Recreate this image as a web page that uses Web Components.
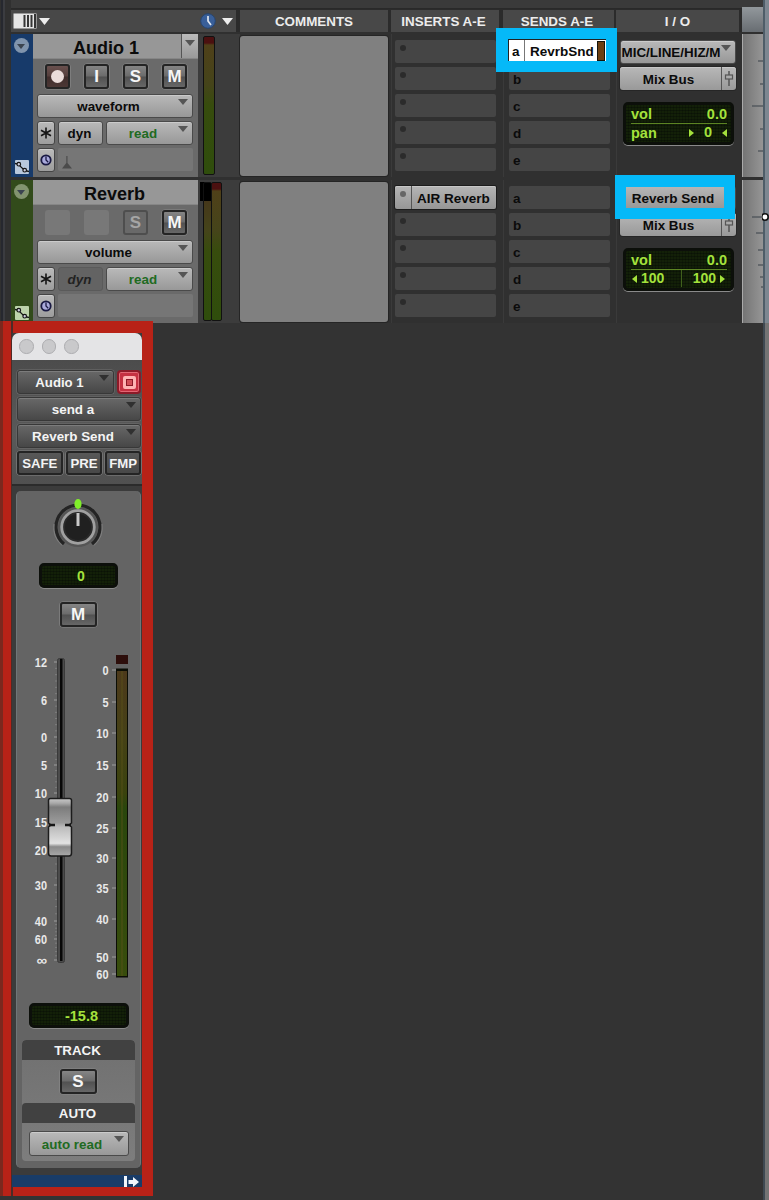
<!DOCTYPE html>
<html lang="en">
<head>
<meta charset="utf-8">
<title>Edit window</title>
<style>
html,body{margin:0;background:#333;height:1200px;overflow:hidden}
body{font:bold 13.4px/24px "Liberation Sans",Arial,sans-serif;color:#0b0b0b;width:769px}
</style>
</head>
<body>
<daw-app></daw-app>
<script>
const define = (name, css, html) => customElements.define(name, class extends HTMLElement {
  constructor() {
    super();
    const t = document.createElement('template');
    const markup = typeof html === 'function' ? html(this) : html;
    t.innerHTML = `<style>*{box-sizing:border-box}:host{display:block;box-sizing:border-box}${css}</style>${markup}`;
    this.attachShadow({ mode: 'open' }).appendChild(t.content.cloneNode(true));
  }
});
const tri = (c, w = 10, h = 6) => `<svg width="${w}" height="${h}" viewBox="0 0 10 6" preserveAspectRatio="none"><path d="M0 0H10L5 6Z" fill="${c}"/></svg>`;

/* light popup selector */
define('pop-select', `
:host{height:24px;border-radius:3px;border:1px solid #4a4a4a;background:linear-gradient(#b9b9b9,#989898);box-shadow:inset 0 1px #cbcbcb;display:flex;align-items:center;justify-content:center;position:relative;line-height:22px;white-space:nowrap;overflow:hidden}
:host([auto]){color:#1f6b22}
:host([plain]) svg{display:none}
:host([flat]){background:#636363;border-color:#5a5a5a;box-shadow:none;color:#222;font-style:italic}
:host([dark]){color:#f4f4f4;background:linear-gradient(#686868,#474747);border-color:#383838;box-shadow:inset 0 1px #7c7c7c,0 0 0 .5px #707070}
span{padding-top:2px}
svg{position:absolute;right:4px;top:4px}`,
  e => `<span style="padding-right:var(--pr,0)"><slot></slot></span>${tri(e.hasAttribute('dark') ? '#303030' : '#555')}`);

/* square button: record, input, solo, mute */
define('mini-button', `
:host{width:25px;height:25px;border-radius:3px;border:2px solid #242424;background:linear-gradient(#858585,#6b6b6b 48%,#515151 52%,#676767);color:#f6f6f6;font-size:17px;line-height:22px;text-align:center;box-shadow:0 0 0 .6px #8a8a8a}
:host([wide]){width:37px}
:host([rec]){background:linear-gradient(#69504e,#563f3d 48%,#402d2c 52%,#4c3735);display:flex;align-items:center;justify-content:center}
:host([dim]){color:#a5a5a5;background:#696969;border-color:#4e4e4e;box-shadow:none}
:host([blank]){border:0;background:#787878;box-shadow:none}
i{width:13px;height:13px;border-radius:50%;background:#eadcda;flex:none}`,
  e => e.hasAttribute('rec') ? '<i></i>' : '<slot></slot>');

define('icon-button', `
:host{width:18px;height:24px;border-radius:3px;border:1px solid #454545;background:linear-gradient(#bababa,#9d9d9d);box-shadow:inset 0 1px #cdcdcd;display:flex;align-items:center;justify-content:center}`,
  e => e.getAttribute('kind') === 'star'
    ? `<svg width="12" height="12" viewBox="-6 -6 12 12" stroke="#151515" stroke-width="1.6"><path d="M0-5.6V5.6M-5-2.8L5 2.8M-5 2.8L5-2.8"/></svg>`
    : `<svg width="12" height="12" viewBox="-6 -6 12 12" fill="none"><circle r="4.7" fill="#a9a9dc" stroke="#191943" stroke-width="1.8"/><path d="M0-3.6V0L2.2 2.2" stroke="#191943" stroke-width="1.3"/></svg>`);

define('level-meter', `
:host{width:var(--w,12px);height:139px;border:1px solid #111;border-radius:2px;background:linear-gradient(#4b1010 0 6px,#4f4019 8px,#45441a 35%,#374c0d 50%,#2f4d0c)}
`, '');

define('track-head', `
:host{display:flex;height:143px;width:187px}
.strip{width:22px;background:var(--strip);display:flex;flex-direction:column;align-items:center;justify-content:space-between;padding:4px 2px 3px 0}
.fold{width:15px;height:15px;border-radius:50%;background:var(--fold);display:flex;align-items:center;justify-content:center;padding-top:1px}
.auto{display:block;margin-right:-2px}
.body{width:165px;background:#6a6a6a}
.name{height:25px;background:#979797;display:flex;font-size:18px;line-height:28px;border-bottom:1px solid #868686}
.name span{flex:1;text-align:center}
.menu{width:17px;background:linear-gradient(#bbb,#999);border-left:1px solid #555;display:flex;justify-content:center;padding-top:6px}
.btns{display:flex;gap:14px;padding:5px 0 0 12px;height:35px}
.controls{display:grid;gap:3px;padding-left:4px}
.line{display:flex;gap:3px}
.note{width:135px;height:23px;background:#767676;border-radius:2px;padding:5px 0 0 3px}
`, e => {
    const a = e.hasAttribute('audio');
    return `<div class="strip"><div class="fold">${tri('#3b4450', 8, 5)}</div>
<svg class="auto" width="14" height="14" viewBox="0 0 14 14"><rect width="14" height="14" rx="1" fill="${a ? '#b9c8dc' : '#bdd3ab'}"/><path d="M0 3.5L3 4L9.6 10.5L14 11.5" stroke="#161616" stroke-width="1.3" fill="none"/><circle cx="3.8" cy="4.2" r="1.8" fill="#ccd" stroke="#161616" stroke-width="1.2"/><circle cx="9.7" cy="10.2" r="1.8" fill="#ccd" stroke="#161616" stroke-width="1.2"/></svg></div>
<div class="body"><div class="name"><span style="padding-right:${a ? 2 : 2}px">${e.getAttribute('label')}</span>${a ? `<div class="menu">${tri('#555')}</div>` : ''}</div>
<div class="btns">${a ? '<mini-button rec></mini-button><mini-button>I</mini-button><mini-button>S</mini-button>' : '<mini-button blank></mini-button><mini-button blank></mini-button><mini-button dim>S</mini-button>'}<mini-button>M</mini-button></div>
<div class="controls"><pop-select style="width:156px;--pr:13px">${e.getAttribute('view')}</pop-select>
<div class="line"><icon-button kind="star"></icon-button><pop-select plain ${a ? '' : 'flat'} style="width:45px;--pr:2px">dyn</pop-select><pop-select auto style="width:87px;--pr:13px">read</pop-select></div>
<div class="line"><icon-button kind="clock"></icon-button><div class="note">${a ? '<svg width="12" height="13" viewBox="0 0 12 13"><path d="M5.3 0H6.5V7L11 12.5H1L5.3 7Z" fill="#4b4b4b"/></svg>' : ''}</div></div></div></div>`;
  });

define('slot-cell', `
:host{height:23px;border-radius:2px;background:#454545;display:flex;line-height:25px;padding-left:4px;font-size:13.5px;white-space:nowrap}
:host([on]){background:linear-gradient(#b5b5b5,#969696);box-shadow:0 0 0 1px #1c1c1c,inset 0 1px #c7c7c7}
.dot{width:6px;height:6px;border-radius:50%;background:#2b2b2b;margin:5px 0 0 1px}
:host([on]) .dot{background:#666}
.plug{border-left:1px solid #555;margin-left:5px;padding-left:5px}`,
  e => e.hasAttribute('insert') ? `<span class="dot"></span>${e.hasAttribute('on') ? '<span class="plug"><slot></slot></span>' : ''}` : '<slot></slot>');

define('value-display', `
:host{border:3px solid #0c0f0a;border-radius:5px;background:repeating-linear-gradient(90deg,#0000 0 2px,#0003 2px 3px),repeating-linear-gradient(#132008 0 2px,#0d1707 2px 3px);color:#a4e23c;box-shadow:0 1px #8a8a8a;text-align:center;font-size:14.5px}`, '<slot></slot>');

define('io-counter', `
:host{width:111px;height:43px;margin:12px 0 0 3px}
value-display{height:43px;text-align:left;padding:0 4px 0 5px}
.r{display:flex;justify-content:space-between;height:18px;line-height:18px}
.r+.r{border-top:1px solid #5c8423;line-height:19px}
.p{display:flex;align-items:center;gap:10px;padding-right:0}
.b{display:flex;align-items:center;gap:4px;font-size:14px}
.b+.b{border-left:1px solid #40601c;padding-left:11px}
`, e => {
    const l = '<svg width="5" height="8"><path d="M5 0V8L0 4Z" fill="#a4e23c"/></svg>', r = '<svg width="5" height="8"><path d="M0 0V8L5 4Z" fill="#a4e23c"/></svg>';
    return `<value-display><div class="r"><span>vol</span><span>0.0</span></div>${e.hasAttribute('stereo')
      ? `<div class="r" style="padding:0 2px 0 1px"><span class="b">${l}<span>100</span></span><span class="b"><span>100</span>${r}</span></div>`
      : `<div class="r"><span>pan</span><span class="p">${r}<span>0</span>${l}</span></div>`}</value-display>`;
  });

define('track-row', `
:host{display:grid;grid-template-columns:229px 151px 112px 113px 126px 22px;height:143px;margin-left:11px;background:#303030}
.head{display:flex;background:#3c3c3c}
.meters{display:flex;padding:2px 0 0 var(--mx,5px)}
.com{background:#808080;margin:2px 3px 1px 0;border-radius:3px;box-shadow:0 0 0 1px #252525}
.cell{border-left:1px solid #3a3a3a;padding:6px 0 0 3px;display:flex;flex-direction:column;gap:4px}
.cell.sends{padding-left:5px}
.cell>slot-cell{width:101px;flex:none}
.io{padding-left:3px;border-left:1px solid #3a3a3a;padding-top:6px}
.mix{display:flex;width:116px;height:23px;margin-top:4px;border-radius:3px;background:linear-gradient(#b8b8b8,#999);box-shadow:0 0 0 1px #262626,inset 0 1px #c8c8c8;line-height:25px}
.mix span{width:101px;text-align:center;padding-right:4px}
.mix i{border-left:1px solid #555;width:15px;padding:4px 0 0 2px;line-height:0}
.ruler{background:linear-gradient(90deg,#757575,#979797);border-left:1px solid #aaa}
.ruler svg{display:block}`,
  e => {
    const a = e.hasAttribute('audio');
    const ticks = a ? [[27, 6], [50, 4], [72, 12], [95, 4], [117, 6]] : [[37, 12], [53, 8], [70, 6], [85, 6], [97, 4], [107, 3]];
    return `<div class="head">${a
      ? '<track-head audio label="Audio 1" view="waveform" style="--strip:#173a6a;--fold:#8094ad"></track-head>'
      : '<track-head label="Reverb" view="volume" style="--strip:#324b1b;--fold:#82946f"></track-head>'}
<div class="meters" style="${a ? '' : '--mx:2px'}">${a ? '<level-meter></level-meter>' : '<i style="width:10px;height:19px;background:#000;margin-right:-7px"></i><level-meter style="--w:9px;background:linear-gradient(#000 0 18px,#45371a 18px,#45441a 35%,#374c0d 50%,#2f4d0c)"></level-meter><level-meter style="--w:11px;margin-left:-1px"></level-meter>'}</div></div>
<div class="com"></div>
<div class="cell">${[0, 1, 2, 3, 4].map(i => `<slot-cell insert ${!a && i === 0 ? 'on>AIR Reverb' : '>'}</slot-cell>`).join('')}</div>
<div class="cell sends">${[...'abcde'].map(c => `<slot-cell>${c}</slot-cell>`).join('')}</div>
<div class="io"><pop-select style="width:116px;height:24px;margin-bottom:-1px;${a ? '--pr:14px' : ''}">${a ? 'MIC/LINE/HIZ/M' : ''}</pop-select>
<div class="mix"><span>Mix Bus</span><i><svg width="10" height="15" viewBox="0 0 10 15"><path d="M5 0V15" stroke="#555" stroke-width="1.5"/><rect x="1.5" y="4" width="7" height="4" fill="#aaa" stroke="#555" stroke-width="1.2"/></svg></i></div>
<io-counter ${a ? '' : 'stereo'}></io-counter></div>
<div class="ruler"><svg width="21" height="143">${ticks.map(t => `<path d="M${21 - t[1]} ${t[0]}h${t[1]}" stroke="#4d5359" stroke-width="1.3"/>`).join('')}</svg></div>`;
  });

define('edit-header', `
:host{display:grid;grid-template-columns:229px 151px 112px 113px 126px 22px;margin:0 0 2px 11px;height:24px;border-top:1px solid #292929;padding-top:1px;line-height:24px;color:#ececec;text-align:center;background:#2b2b2b}
div{background:#484848;height:22px;margin-right:3px}
div:nth-child(4){margin-right:4px}
div:nth-child(5){margin-right:2px;padding-right:3px}
.first{display:flex;align-items:center;padding-left:2px;margin-right:4px}
.rul{background:linear-gradient(#92989c,#686d72);height:25px;margin:-3px 0 0}`,
  `<div class="first"><svg width="24" height="16" viewBox="0 0 24 16"><rect x=".5" y=".5" width="23" height="15" fill="#e5e5e5"/><path d="M11.5 2V14M15 2V14M18.5 2V14M22 1V15" stroke="#343434" stroke-width="2"/></svg><span style="line-height:0;margin-left:2px">${tri('#eee', 11, 7)}</span>
<svg style="margin-left:150px" width="16" height="16" viewBox="-8 -8 16 16"><circle r="7.3" fill="#395f99" stroke="#28466f"/><path d="M0-5V0L3 4" stroke="#dfe6ef" stroke-width="1.7" fill="none"/></svg><span style="line-height:0;margin-left:6px">${tri('#eee', 11, 7)}</span></div>
<div>COMMENTS</div><div style="padding-right:3px">INSERTS A-E</div><div style="padding-right:3px">SENDS A-E</div><div>I / O</div><div class="rul"></div>`);

define('fader-panel', `:host{height:340px}svg{display:block}
text{font:bold 13.500px "Liberation Sans",Arial,sans-serif;fill:#e9e9e9;text-anchor:end}`, () => {
    const L = [['12', 662], ['6', 700], ['0', 737], ['5', 765], ['10', 793], ['15', 822], ['20', 850], ['30', 885], ['40', 921], ['60', 939], ['∞', 960]];
    const R = [['0', 670], ['5', 702], ['10', 733], ['15', 765], ['20', 797], ['25', 828], ['30', 858], ['35', 888], ['40', 919], ['50', 957], ['60', 974]];
    const lab = (d, x) => d.map(([t, y]) => `<text transform="translate(${x} ${y + 5 - 645}) scale(${t === '∞' ? 1.1 : .81} 1)">${t}</text>`).join('');
    let minor = '';
    for (let i = 0; i < L.length - 1; i++) { const n = i < 2 ? 6 : 5; for (let k = 1; k < n; k++) minor += `M38 ${L[i][1] - 645 + (L[i + 1][1] - L[i][1]) * k / n}h3`; }
    return `<svg width="124" height="340"><defs>
<linearGradient id="m" x2="0" y2="1"><stop stop-color="#4c391b"/><stop offset=".22" stop-color="#454116"/><stop offset=".4" stop-color="#3a420d"/><stop offset=".45" stop-color="#29460c"/><stop offset="1" stop-color="#384d0c"/></linearGradient>
<linearGradient id="k" x2="0" y2="1"><stop stop-color="#c8c8c8"/><stop offset=".08" stop-color="#aaa"/><stop offset=".15" stop-color="#7c7c7c"/><stop offset=".42" stop-color="#9b9b9b"/><stop offset=".5" stop-color="#bcbcbc"/><stop offset=".78" stop-color="#e2e2e2"/><stop offset=".84" stop-color="#8a8a8a"/><stop offset="1" stop-color="#aaa"/></linearGradient></defs>
<path d="${minor}" stroke="#7d7d7d"/><path d="${L.map(l => `M37 ${l[1] - 645}h5`).join('')}${R.map(l => `M95 ${l[1] - 645}h5`).join('')}" stroke="#9c9c9c"/>
<rect x="40.5" y="13.500" width="7" height="304" rx="2" fill="#4b4b4b" stroke="#3a3a3a"/><rect x="43" y="14" width="2.500" height="302" fill="#080808"/>
<rect x="99" y="10" width="12" height="9" fill="#2d0e0b"/><rect x="99" y="23.500" width="12" height="309" fill="#0b0d05"/><rect x="100" y="26" width="10" height="305" fill="url(#m)"/><path d="M105 26V331" stroke="#5a5218" stroke-opacity=".4" stroke-width="2"/>
${lab(L, 30)}${lab(R, 91.500)}
<path d="M33.500 153.500H52.500Q54.500 153.500 54.500 155.500V178L52 180L54.500 182V208Q54.500 211 52 211H34Q31.500 211 31.500 208V182L34 180L31.500 178V155.500Q31.500 153.500 33.500 153.500Z" fill="url(#k)" stroke="#1c1c1c" stroke-width="1.500"/><path d="M32 180H38M48 180H54" stroke="#161616" stroke-width="2.600"/></svg>`;
  });

define('pan-knob', `:host{width:50px;height:54px}svg{display:block}`,
  `<svg width="50" height="54" viewBox="-25 -29 50 54"><circle r="20" fill="#555"/><path d="M-14 17A22 22 0 1 1 14 17" fill="none" stroke="#242424" stroke-width="3.200"/><path d="M-16 18.500A24.200 24.200 0 0 1-24-3M16 18.500A24.200 24.200 0 0 0 24-3" fill="none" stroke="#868686" stroke-width=".8"/><circle r="16.300" fill="#2a2a2a" stroke="#a0a0a0" stroke-width="2.800"/><circle r="13" fill="#202020"/><path d="M0-14V-1" stroke="#c9c9c9" stroke-width="3"/><ellipse cy="-23" rx="3.600" ry="5" fill="#80ee2a"/></svg>`);

define('send-window', `
:host{width:130px;height:854px;display:flex;flex-direction:column;background:#3b3b3b;color:#f4f4f4}
.bar{height:27px;background:#e4e4e6;border-radius:7px 7px 0 0;display:flex;gap:8px;padding:6px 0 0 7px}
.bar i{width:14.500px;height:14.500px;box-sizing:border-box;border-radius:50%;background:#c9c9cb;border:1px solid #adadb0}
.top{height:126px;background:linear-gradient(#4c4c4c,#595959 60%,#505050);padding:10px 1px 0 5px;display:flex;flex-direction:column;gap:3px;border-bottom:2px solid #2b2b2b}
.line{display:flex;gap:3px}
.target{width:24px;height:24px;border-radius:4px;background:#c63142;border:2px solid #8c1a28;display:flex;align-items:center;justify-content:center;box-shadow:inset 0 0 0 1px #e26774}
.target i{width:13px;height:13px;border:3px solid #ffb4b4;background:#d34f58;border-radius:2px;box-shadow:inset 0 0 0 1px #8c1a28}
.b{height:24px;border:2px solid #242424;border-radius:3px;background:linear-gradient(#585858,#484848);box-shadow:0 0 0 .600px #858585;line-height:21px;text-align:center;font-size:13.200px;display:flex;justify-content:center}
.strip{margin:5px 1px 0 4px;height:677px;background:#646464;border-radius:5px;display:flex;flex-direction:column;align-items:center;border-left:1px solid #6f7678;border-right:1px solid #6f7678}
.group{width:113px;height:121px;margin-top:12px;background:linear-gradient(#707070,#7d7d7d);border-radius:4px;overflow:hidden;display:flex;flex-direction:column;align-items:center}
.group h4{margin:0;width:100%;height:20px;background:#414141;font-size:13.300px;line-height:21px;text-align:center;padding-right:2px;border-radius:4px 4px 0 0}
.foot{margin-top:auto;height:12px;background:#193c68;display:flex;justify-content:flex-end;padding-right:3px}
fader-panel{align-self:flex-start}
`, `<div class="bar"><i></i><i></i><i></i></div>
<div class="top"><div class="line"><pop-select dark style="width:97px;--pr:12px;font-size:13.200px">Audio 1</pop-select><div class="target"><i></i></div></div>
<pop-select dark style="--pr:12px">send a</pop-select><pop-select dark style="--pr:12px">Reverb Send</pop-select>
<div class="line"><div class="b" style="width:46px">SAFE</div><div class="b" style="width:37px">PRE</div><div class="b" style="width:36px">FMP</div></div></div>
<div class="strip"><pan-knob style="margin:7px 2px 0 0"></pan-knob>
<value-display style="width:79px;height:25px;line-height:20px;font-size:14px;margin-top:11px;padding-left:5px">0</value-display>
<mini-button wide style="margin:14px 1px 0 0">M</mini-button>
<fader-panel style="margin-top:18px"></fader-panel>
<value-display style="width:100px;height:25px;line-height:20px;margin-top:18px;padding-left:6px">-15.8</value-display>
<div class="group"><h4>TRACK</h4><mini-button wide style="margin:9px 1px 9px 0;height:25px">S</mini-button><h4>AUTO</h4><pop-select auto style="width:100px;height:25px;line-height:22px;margin-top:8px;--pr:13px;flex:none">auto read</pop-select></div></div>
<div class="foot"><svg width="15" height="12" viewBox="0 0 15 12"><path d="M0 1H3V12H0ZM4.500 5H9V2L15 7L9 12V9H4.500Z" fill="#f2f5fa"/></svg></div>`);

define('callout-box', `
:host{position:absolute;background:#05b9f8;display:flex;align-items:center}
::slotted(*){flex:none}`, '<slot></slot>');

define('daw-app', `
:host{position:relative;width:769px;height:1200px;background:#333;display:grid;grid-template-columns:763px 6px}
.edit{display:flex;flex-direction:column}
.toolbar{height:8px;background:#3a3a3a;margin-left:11px}
.top{background:linear-gradient(90deg,#303030 0 1px,#26282f 1px 3px,#3b3c40 3px 5px,#303030 5px);height:323px}
.side{background:linear-gradient(90deg,#3f4952 0 2px,#747474 2px);position:relative}
.side .up{height:323px;background:linear-gradient(90deg,#4e5d68 0 2px,#7d8791 2px)}
.side svg{position:absolute;left:-1px;top:211px}
.floating{position:absolute;left:0;top:321px;width:153px;height:875px;background:linear-gradient(90deg,#7b281e 0 3px,#b82217 3px 11px,#4d2b27 11px 13px,#b82217 13px);padding:12px 0 0 12px}
.send{display:flex;width:98px;height:22px;margin-left:12px;background:#fff;border-left:1px solid #222;border-top:1px solid #222;line-height:24px;font-size:13.500px}
.send b:first-child{width:16px;padding-left:3px;border-right:1px solid #777;line-height:24px}
.send b:nth-child(2){width:72px;padding-left:5px}
.send i{width:8px;background:#6b3f12;border:1px solid #16140a;margin-top:1px}
.out{width:98px;height:21px;margin-left:11px;background:linear-gradient(#b6b6b6,#989898);text-align:center;line-height:23px;font-size:13.500px;padding-right:4px}
track-row+track-row{margin-top:3px}
`, `<div class="edit"><div class="top"><div class="toolbar"></div><edit-header></edit-header><track-row audio></track-row><track-row></track-row></div></div>
<div class="side"><div class="up"></div><svg width="7" height="12"><circle cx="3" cy="6" r="3.200" fill="#fff" stroke="#111" stroke-width="1.600"/></svg></div>
<callout-box style="left:496px;top:28px;width:121px;height:44px"><div class="send"><b>a</b><b>RevrbSnd</b><i></i></div></callout-box>
<callout-box style="left:615px;top:175px;width:120px;height:44px"><div class="out">Reverb Send</div></callout-box>
<div class="floating"><send-window></send-window></div>`);
</script>
</body>
</html>
